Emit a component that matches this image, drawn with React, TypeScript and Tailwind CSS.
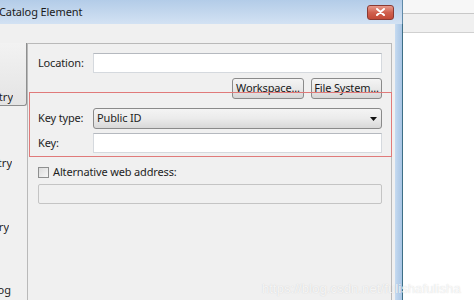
import React from 'react';

const font = { fontFamily: '"Noto Sans", "Open Sans", sans-serif' };

/** Left list of catalog entry kinds, cut off by the window edge */
const SideTab: React.FC<{ label: string; width: string; selected?: boolean; className?: string }> = ({
  label,
  width,
  selected,
  className = '',
}) => (
  <div
    className={`flex items-end ${
      selected
        ? 'h-[63px] border-r border-b border-[#8e8f8f] rounded-br-[3px] bg-gradient-to-b from-[#f2f2f2] to-[#e4e4e4]'
        : ''
    } ${className}`}
  >
    <div className={`${width} flex justify-end overflow-hidden whitespace-nowrap text-[11px] text-[#1e1e1e] leading-[14px] pb-[1px]`}>
      {label}
    </div>
  </div>
);

const WinButton: React.FC<{ children: React.ReactNode; className?: string }> = ({ children, className = '' }) => (
  <button
    className={`h-[21px] flex items-center justify-center rounded-[3px] border border-[#8a8a8a] bg-gradient-to-b from-[#f4f4f4] via-[#e9e9e9] to-[#d6d6d6] text-[11px] tracking-[-0.15px] text-[#1a1a1a] ${className}`}
  >
    {children}
  </button>
);

export default function App() {
  return (
    <div className="relative w-[474px] h-[300px] overflow-hidden flex bg-white" style={font}>
      {/* Dialog window */}
      <div className="w-[403px] flex flex-col flex-shrink-0">
        {/* Title bar */}
        <div className="h-[24px] flex items-center justify-between pr-[8px] bg-gradient-to-b from-[#b3cce8] to-[#d3e2f3] border-r border-[#5f8aa8]">
          <span className="ml-[-1px] text-[11px] tracking-[-0.1px] text-[#1b1b1b]">Catalog Element</span>
          <div className="w-[27px] h-[15px] flex items-center justify-center rounded-[3px] border border-[#8a3a33] bg-gradient-to-b from-[#e79a8c] via-[#d0614f] to-[#c24a37]">
            <svg width="9" height="8" viewBox="0 0 9 8">
              <path d="M1 1 L8 7 M8 1 L1 7" stroke="#ffffff" strokeWidth="2" strokeLinecap="round" />
            </svg>
          </div>
        </div>

        {/* Body + right frame */}
        <div className="flex-1 flex">
          <div className="w-[395px] bg-[#f0f0f0] pt-[19px] flex">
            {/* Left tab list */}
            <div className="w-[27px] flex flex-col">
              <SideTab label="Catalog Entry" width="w-[13px]" selected />
              <SideTab label="Rewrite Entry" width="w-[12px]" className="mt-[50px]" />
              <SideTab label="Delegate Entry" width="w-[9px]" className="mt-[49px]" />
              <SideTab label="Next Catalog" width="w-[11px]" className="mt-[48px]" />
            </div>

            {/* Content panel */}
            <div className="relative w-[365px] border-l border-t border-r border-[#b9b9b9] bg-[#f0f0f0] pl-[10px] pr-[9px] pt-[9px] text-[11px] tracking-[-0.15px] text-[#1e1e1e]">
              {/* Location */}
              <div className="flex items-center h-[20px]">
                <span className="w-[55px]">Location:</span>
                <div className="flex-1 h-[20px] bg-white border border-[#d5d9de] border-t-[#b5b9bf]" />
              </div>

              <div className="flex justify-end gap-[7px] mt-[5px]">
                <WinButton className="w-[72px]">Workspace...</WinButton>
                <WinButton className="w-[71px]">File System...</WinButton>
              </div>

              {/* Key type */}
              <div className="flex items-center h-[21px] mt-[9px]">
                <span className="w-[55px]">Key type:</span>
                <div className="flex-1 h-[21px] flex items-center justify-between pl-[3px] pr-[4px] rounded-[3px] border border-[#8a8a8a] bg-gradient-to-b from-[#f4f4f4] via-[#ebebeb] to-[#d8d8d8]">
                  <span>Public ID</span>
                  <svg width="7" height="4" viewBox="0 0 7 4">
                    <path d="M0 0 L7 0 L3.5 4 Z" fill="#111111" />
                  </svg>
                </div>
              </div>

              {/* Key */}
              <div className="flex items-center h-[20px] mt-[4px]">
                <span className="w-[55px]">Key:</span>
                <div className="flex-1 h-[20px] bg-white border border-[#d5d9de] border-t-[#b5b9bf]" />
              </div>

              {/* Alternative web address */}
              <div className="flex items-center gap-[4px] mt-[14px] h-[11px]">
                <div className="w-[11px] h-[11px] border border-[#8e8f8f] bg-gradient-to-br from-[#dcdcdc] to-[#f6f6f6]" />
                <span>Alternative web address:</span>
              </div>
              <div className="mt-[6px] h-[20px] border border-[#c4c4c4] rounded-[2px] bg-[#f0f0f0]" />

              {/* Annotation rectangle drawn over the screenshot */}
              <div className="absolute left-[1px] top-[48px] w-[363px] h-[65px] border border-[#e07a7a]" />
            </div>
          </div>
          <div className="w-[8px] bg-gradient-to-r from-[#c6dbf1] via-[#b6cfea] to-[#a9c6e6] border-r border-[#3d6f86]" />
        </div>
      </div>

      {/* Window behind */}
      <div className="flex-1 flex flex-col">
        <div className="h-[14px] bg-[#f7f7f7] border-b border-[#c8c8c8]" />
        <div className="h-[19px] bg-[#f0f0f0] border-b border-[#d0d0d0]" />
        <div className="flex-1 bg-white" />
      </div>

      {/* Watermark */}
      <div
        className="absolute left-[262px] top-[279px] text-[13px] text-white/80 tracking-[0.1px] whitespace-nowrap"
        style={{ fontFamily: '"Liberation Sans", sans-serif', textShadow: '0 0 1px rgba(120,120,120,0.35)' }}
      >
        https://blog.csdn.net/fulishafulisha
      </div>
    </div>
  );
}
